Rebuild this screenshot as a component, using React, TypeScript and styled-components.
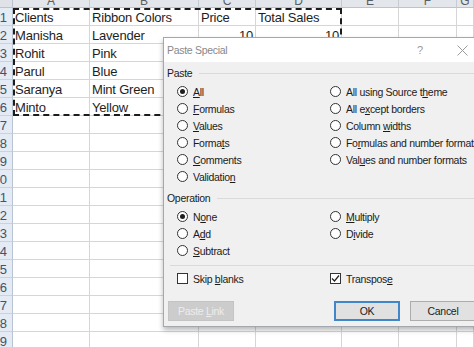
import styled, { createGlobalStyle } from "styled-components";

const Global = createGlobalStyle`
  html, body {
    margin: 0;
    padding: 0;
    background: #ffffff;
    overflow: hidden;
  }
`;

const COLS = [13, 77, 109, 57, 86, 57, 58];
const LETTERS = ["A", "B", "C", "D", "E", "F", "G"];
const ROW_COUNT = 19;

const DATA: (string | number)[][] = [
  ["Clients", "Ribbon Colors", "Price", "Total Sales"],
  ["Manisha", "Lavender", 10, 10],
  ["Rohit", "Pink", 10, 10],
  ["Parul", "Blue", 10, 10],
  ["Saranya", "Mint Green", 10, 10],
  ["Minto", "Yellow", 10, 10],
];

const Page = styled.div`
  position: relative;
  width: 474px;
  height: 347px;
  overflow: hidden;
`;

const Sheet = styled.div`
  display: grid;
  grid-template-columns: ${COLS.map((c) => c + "px").join(" ")} 1fr;
  grid-template-rows: 8px repeat(${ROW_COUNT}, 18px);
  font-family: "Liberation Sans", Arial, sans-serif;
  font-size: 13px;
  color: #1e1e1e;
`;

const Corner = styled.div`
  background: #dfe3e8;
  border-right: 1px solid #b8c4d2;
  border-bottom: 1px solid #b8c4d2;
`;

const ColHead = styled.div`
  display: flex;
  justify-content: center;
  align-items: flex-end;
  overflow: hidden;
  background: #e3e6ea;
  border-right: 1px solid #c6ccd3;
  border-bottom: 1px solid #b8c4d2;
  color: #5a5f66;
  font-size: 12px;
  line-height: 12px;
`;

const RowHead = styled.div`
  overflow: hidden;
  box-sizing: border-box;
  background: #e4ebf4;
  border-right: 1px solid #b8c4d2;
  border-bottom: 1px solid #c9d3df;
  color: #44516a;
  font-size: 13px;
  line-height: 14px;
  padding-top: 3px;
  padding-right: 5px;
  text-align: right;
  white-space: nowrap;
  direction: rtl;
`;

const Cell = styled.div<{ $num?: boolean }>`
  overflow: visible;
  box-sizing: border-box;
  border-right: 1px solid #d6d6d6;
  border-bottom: 1px solid #d6d6d6;
  line-height: 14px;
  padding: 3px 2px 0 2px;
  text-align: ${(p) => (p.$num ? "right" : "left")};
  white-space: nowrap;
  letter-spacing: -0.2px;
`;

const CopyMarquee = styled.div`
  position: absolute;
  left: 13px;
  top: 8px;
  width: 329px;
  height: 108px;
  box-sizing: border-box;
  border: 2px dashed #1c1c1c;
  pointer-events: none;
`;

const Dialog = styled.div`
  position: absolute;
  left: 163px;
  top: 37px;
  width: 322px;
  height: 290px;
  box-sizing: border-box;
  border: 1px solid #a3a8ae;
  background: #f0f0f0;
  box-shadow: 0 3px 5px rgba(0, 0, 0, 0.28);
  display: flex;
  flex-direction: column;
  font-family: "Liberation Sans", Arial, sans-serif;
  font-size: 10.5px;
  letter-spacing: -0.3px;
  color: #1b1b1b;
`;

const TitleBar = styled.div`
  height: 24px;
  background: #ffffff;
  display: flex;
  align-items: center;
  padding-left: 3px;
`;

const Title = styled.div`
  flex: 1;
  color: #888888;
  font-size: 10.5px;
`;

const TitleButton = styled.div<{ $w: number }>`
  width: ${(p) => p.$w}px;
  height: 24px;
  display: flex;
  align-items: center;
  justify-content: center;
  color: #9a9a9a;
  font-size: 11px;
`;

const Body = styled.div`
  flex: 1;
  display: flex;
  flex-direction: column;
  padding: 3px 8px 0 3px;
`;

const GroupHeader = styled.div<{ $top: number }>`
  display: flex;
  align-items: center;
  height: 16px;
  margin-top: ${(p) => p.$top}px;
  &::after {
    content: "";
    flex: 1;
    height: 1px;
    background: #dadada;
    margin-left: 7px;
  }
`;

const OptionGrid = styled.div<{ $top: number; $rows: number }>`
  display: grid;
  grid-template-columns: 153px 1fr;
  grid-template-rows: repeat(${(p) => p.$rows}, 17px);
  grid-auto-flow: column;
  margin-left: 10px;
  margin-top: ${(p) => p.$top}px;
`;

const Option = styled.div`
  display: flex;
  align-items: center;
  gap: 5px;
  white-space: nowrap;
`;

const RadioCircle = styled.span<{ $on?: boolean }>`
  width: 11px;
  height: 11px;
  box-sizing: border-box;
  border: 1px solid #333333;
  border-radius: 50%;
  background: #ffffff;
  display: flex;
  align-items: center;
  justify-content: center;
  flex-shrink: 0;
  &::after {
    content: "";
    display: ${(p) => (p.$on ? "block" : "none")};
    width: 5px;
    height: 5px;
    border-radius: 50%;
    background: #1e1e1e;
  }
`;

const CheckBox = styled.span`
  width: 11px;
  height: 11px;
  box-sizing: border-box;
  border: 1px solid #333333;
  background: #ffffff;
  display: flex;
  align-items: center;
  justify-content: center;
  flex-shrink: 0;
`;

const Separator = styled.div`
  height: 1px;
  background: #dadada;
  margin: 6px 0 0 3px;
`;

const ButtonRow = styled.div`
  display: flex;
  align-items: center;
  margin-top: 14px;
  padding-left: 1px;
  gap: 10px;
`;

const Button = styled.div<{ $kind?: "default" | "disabled" }>`
  width: 66px;
  height: 20px;
  box-sizing: border-box;
  display: flex;
  align-items: center;
  justify-content: center;
  background: ${(p) => (p.$kind === "disabled" ? "#cccccc" : "#e1e1e1")};
  border: ${(p) =>
    p.$kind === "default"
      ? "2px solid #3f87c9"
      : p.$kind === "disabled"
      ? "1px solid #c4c4c4"
      : "1px solid #adadad"};
  color: ${(p) => (p.$kind === "disabled" ? "#ececec" : "#1b1b1b")};
`;

const Spacer = styled.div`
  flex: 1;
`;

type Opt = { pre: string; key: string; post: string; on?: boolean };

const paste: Opt[] = [
  { pre: "", key: "A", post: "ll", on: true },
  { pre: "", key: "F", post: "ormulas" },
  { pre: "", key: "V", post: "alues" },
  { pre: "Forma", key: "t", post: "s" },
  { pre: "", key: "C", post: "omments" },
  { pre: "Validatio", key: "n", post: "" },
  { pre: "All using Source t", key: "h", post: "eme" },
  { pre: "All e", key: "x", post: "cept borders" },
  { pre: "Column ", key: "w", post: "idths" },
  { pre: "Fo", key: "r", post: "mulas and number formats" },
  { pre: "Val", key: "u", post: "es and number formats" },
];

const operation: Opt[] = [
  { pre: "N", key: "o", post: "ne", on: true },
  { pre: "A", key: "d", post: "d" },
  { pre: "", key: "S", post: "ubtract" },
  { pre: "", key: "M", post: "ultiply" },
  { pre: "D", key: "i", post: "vide" },
];

function Label({ o }: { o: Opt }) {
  return (
    <span>
      {o.pre}
      <u>{o.key}</u>
      {o.post}
    </span>
  );
}

function RadioGroup({ items, rows, top }: { items: Opt[]; rows: number; top: number }) {
  return (
    <OptionGrid $top={top} $rows={rows}>
      {items.map((o, i) => (
        <Option key={i}>
          <RadioCircle $on={o.on} />
          <Label o={o} />
        </Option>
      ))}
    </OptionGrid>
  );
}

export default function App() {
  const cells = [];
  cells.push(<Corner key="corner" />);
  LETTERS.forEach((l) =>
    cells.push(
      <ColHead key={"h" + l}>
        <span>{l}</span>
      </ColHead>
    )
  );
  for (let r = 0; r < ROW_COUNT; r++) {
    cells.push(<RowHead key={"r" + r}>{r + 1}</RowHead>);
    for (let c = 0; c < LETTERS.length; c++) {
      const v = DATA[r]?.[c];
      cells.push(
        <Cell key={r + "-" + c} $num={typeof v === "number"}>
          {v ?? ""}
        </Cell>
      );
    }
  }

  return (
    <Page>
      <Global />
      <Sheet>{cells}</Sheet>
      <CopyMarquee />
      <Dialog>
        <TitleBar>
          <Title>Paste Special</Title>
          <TitleButton $w={40}>?</TitleButton>
          <TitleButton $w={44}>
            <svg width="11" height="11" viewBox="0 0 11 11">
              <path d="M0.5 0.5 L10.5 10.5 M10.5 0.5 L0.5 10.5" stroke="#9a9a9a" strokeWidth="1" fill="none" />
            </svg>
          </TitleButton>
        </TitleBar>
        <Body>
          <GroupHeader $top={0}>Paste</GroupHeader>
          <RadioGroup items={paste} rows={6} top={2} />
          <GroupHeader $top={5}>Operation</GroupHeader>
          <RadioGroup items={operation} rows={3} top={2} />
          <Separator />
          <OptionGrid $top={4} $rows={1}>
            <Option>
              <CheckBox />
              <span>
                Skip <u>b</u>lanks
              </span>
            </Option>
            <Option>
              <CheckBox>
                <svg width="9" height="9" viewBox="0 0 9 9">
                  <path d="M1 4.5 L3.5 7 L8 1.5" stroke="#222" strokeWidth="1.2" fill="none" />
                </svg>
              </CheckBox>
              <span>
                Transpos<u>e</u>
              </span>
            </Option>
          </OptionGrid>
          <ButtonRow>
            <Button $kind="disabled">
              <span>
                Paste <u>L</u>ink
              </span>
            </Button>
            <Spacer />
            <Button $kind="default">OK</Button>
            <Button>Cancel</Button>
          </ButtonRow>
        </Body>
      </Dialog>
    </Page>
  );
}
